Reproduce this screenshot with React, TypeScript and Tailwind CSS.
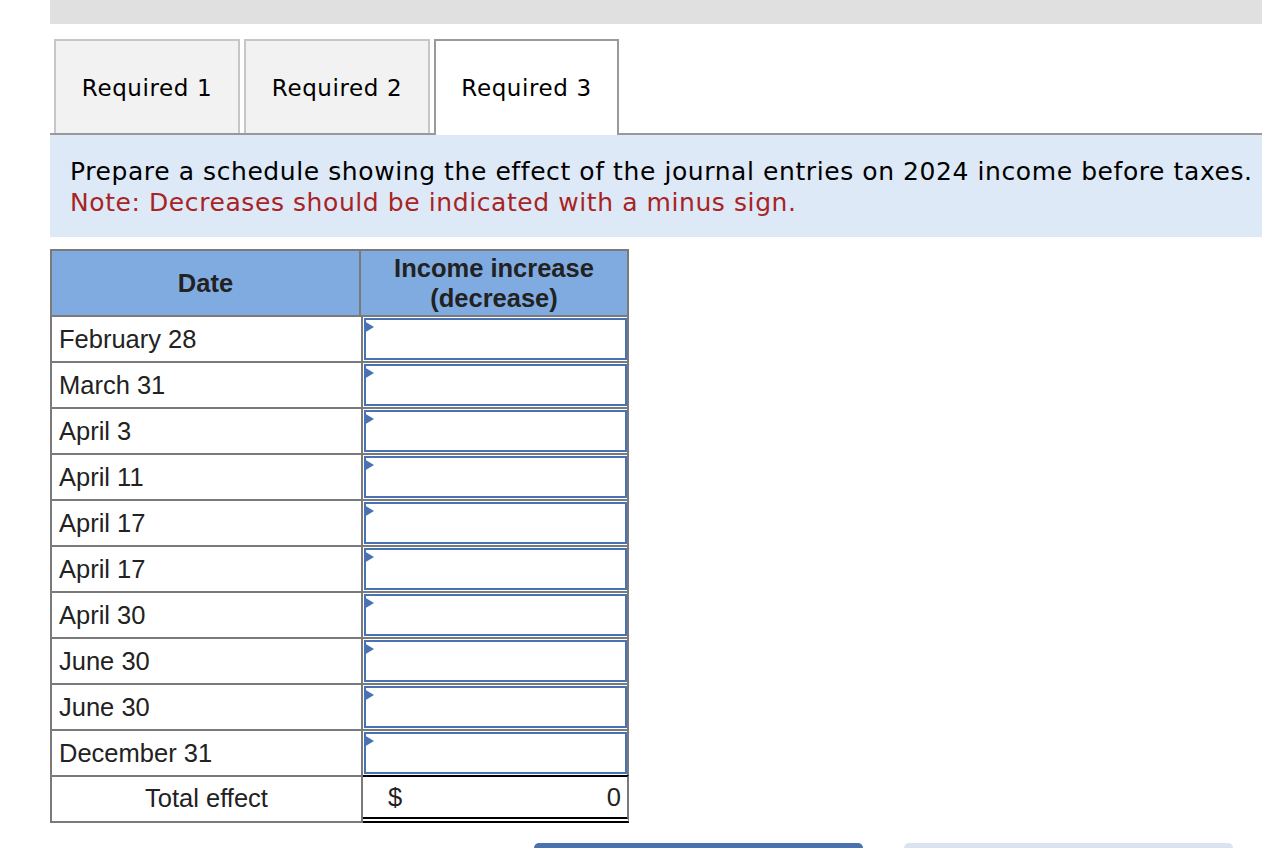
import React from 'react';

const dates = [
  'February 28',
  'March 31',
  'April 3',
  'April 11',
  'April 17',
  'April 17',
  'April 30',
  'June 30',
  'June 30',
  'December 31',
];

const tabs = [
  { label: 'Required 1', active: false },
  { label: 'Required 2', active: false },
  { label: 'Required 3', active: true },
];

const verdana = { fontFamily: '"DejaVu Sans", Verdana, sans-serif' };
const arial = { fontFamily: '"Liberation Sans", Arial, sans-serif' };

const App = () => {
  return (
    <div className="w-[1262px] h-[848px] overflow-hidden bg-white">
      {/* top grey strip */}
      <div className="ml-[50px] h-[24px] bg-[#e0e0e0]" />

      {/* tabs */}
      <div className="ml-[50px] mt-[15px] flex gap-[4px] pl-[4px] border-b-2 border-[#999999]" style={verdana}>
        {tabs.map((tab) => (
          <div
            key={tab.label}
            className={
              tab.active
                ? 'w-[185px] h-[96px] -mb-[2px] flex items-center justify-center bg-white border-2 border-b-0 border-[#9a9a9a] text-[23px] tracking-[0.6px] text-black'
                : 'w-[186px] h-[94px] pt-[2px] flex items-center justify-center bg-[#f2f2f2] border-2 border-b-0 border-[#c6c6c6] text-[23px] tracking-[0.6px] text-black'
            }
          >
            {tab.label}
          </div>
        ))}
      </div>

      {/* instructions */}
      <div className="ml-[50px] h-[102px] bg-[#dde9f7] pl-[20px] pt-[21px] text-[25px] tracking-[0.58px] leading-[31px]" style={verdana}>
        <p className="text-black">Prepare a schedule showing the effect of the journal entries on 2024 income before taxes.</p>
        <p className="text-[#a82424]">Note: Decreases should be indicated with a minus sign.</p>
      </div>

      {/* schedule table */}
      <div className="ml-[50px] mt-[12px] w-[579px] text-[#222] text-[25.5px]" style={arial}>
        <div className="flex h-[68px] bg-[#80abe0] border-2 border-[#7a7a7a] font-bold">
          <div className="w-[309px] border-r-2 border-[#7a7a7a] flex items-center justify-center">Date</div>
          <div className="flex-1 flex flex-col items-center justify-center leading-[30px]">
            <span>Income increase</span>
            <span>(decrease)</span>
          </div>
        </div>

        {dates.map((date, i) => (
          <div key={i} className="flex h-[46px] border-b-2 border-[#7a7a7a]">
            <div className="w-[313px] border-l-2 border-r-2 border-[#7a7a7a] flex items-center pl-[7px]">{date}</div>
            <div className="flex-1 border-r-2 border-[#7a7a7a] pl-[1px] pt-[1px]">
              <div className="relative h-[42px] border-2 border-[#4872b4] bg-white">
                <svg className="absolute -left-[2px] top-[1px]" width="10" height="12" viewBox="0 0 10 12">
                  <polygon points="0,0 10,6 0,12" fill="#4872b4" />
                </svg>
              </div>
            </div>
          </div>
        ))}

        <div className="flex h-[48px] -mt-[2px]">
          <div className="w-[313px] border-l-2 border-r-2 border-t-2 border-b-2 border-[#7a7a7a] flex items-center justify-center pb-[2px]">
            Total effect
          </div>
          <div className="flex-1 border-r-2 border-r-[#7a7a7a] border-t-2 border-t-black border-b-[6px] border-b-black border-double flex items-center justify-between pl-[25px] pr-[6px]">
            <span>$</span>
            <span>0</span>
          </div>
        </div>
      </div>

      {/* buttons peeking at bottom */}
      <div className="flex ml-[534px] mt-[20px] gap-[41px]">
        <div className="w-[329px] h-[40px] rounded-t-[5px] bg-[#4872b0]" />
        <div className="w-[329px] h-[40px] rounded-t-[5px] bg-[#dae4f0]" />
      </div>
    </div>
  );
};

export default App;
